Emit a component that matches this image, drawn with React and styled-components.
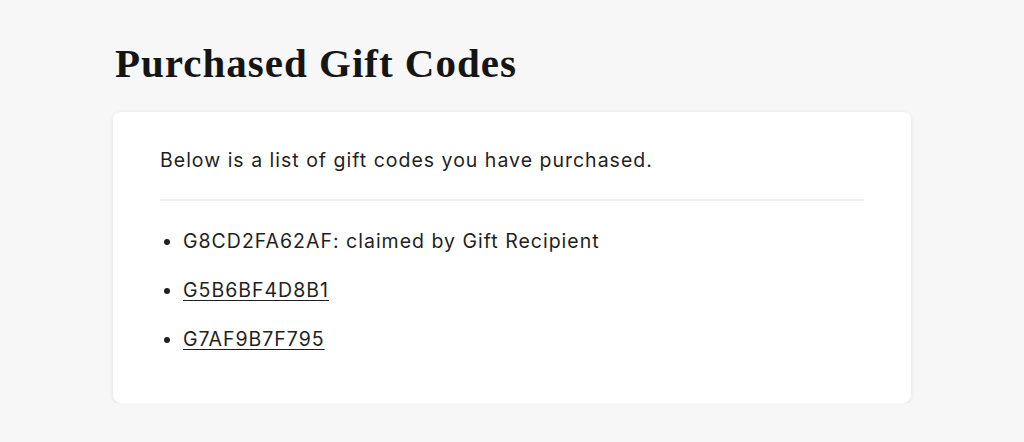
import styled, { createGlobalStyle } from 'styled-components';

const GlobalStyle = createGlobalStyle`
  body {
    margin: 0;
    background: #f7f7f7;
    font-family: Inter, 'Noto Sans', sans-serif;
    color: #1f1f1f;
  }
`;

const Page = styled.main`
  width: 798px;
  margin: 0 auto;
  padding: 38px 0 0;
  box-sizing: border-box;
`;

const Title = styled.h1`
  margin: 0 0 24px 2px;
  font-family: 'Liberation Serif', 'DejaVu Serif', serif;
  font-size: 41px;
  font-weight: 700;
  line-height: 50px;
  color: #151515;
  letter-spacing: 1px;
`;

const Card = styled.section`
  background: #fff;
  border-radius: 8px;
  box-shadow: 0 1px 4px rgba(0, 0, 0, 0.1);
  padding: 35px 47px 51px;
`;

const Intro = styled.p`
  margin: 0;
  font-size: 19.5px;
  letter-spacing: 1px;
  line-height: 26px;
  padding-bottom: 26px;
  border-bottom: 2px solid #eeeeee;
`;

const CodeList = styled.ul`
  list-style: disc;
  margin: 27px 0 0;
  padding-left: 23px;
`;

const CodeItem = styled.li`
  font-size: 19.5px;
  letter-spacing: 1px;
  line-height: 26px;
  margin-bottom: 23px;
  &:last-child {
    margin-bottom: 0;
  }
`;

const CodeLink = styled.a`
  color: #1f1f1f;
  text-decoration: underline;
  text-underline-offset: 3px;
`;

const codes = [
  { code: 'G8CD2FA62AF', claimedBy: 'Gift Recipient' },
  { code: 'G5B6BF4D8B1' },
  { code: 'G7AF9B7F795' },
];

const App = () => {
  return (
    <>
      <GlobalStyle />
      <Page>
        <Title>Purchased Gift Codes</Title>
        <Card>
          <Intro>Below is a list of gift codes you have purchased.</Intro>
          <CodeList>
            {codes.map((c) => (
              <CodeItem key={c.code}>
                {c.claimedBy ? (
                  `${c.code}: claimed by ${c.claimedBy}`
                ) : (
                  <CodeLink href='#'>{c.code}</CodeLink>
                )}
              </CodeItem>
            ))}
          </CodeList>
        </Card>
      </Page>
    </>
  );
};

export default App;
